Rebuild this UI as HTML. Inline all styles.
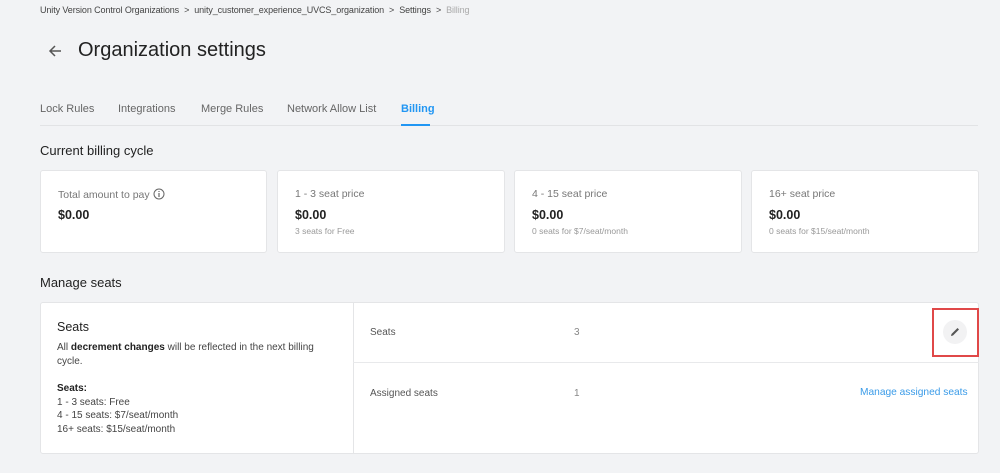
<!DOCTYPE html>
<html><head><meta charset="utf-8"><style>
*{box-sizing:border-box;margin:0;padding:0}
body{width:1000px;height:473px;overflow:hidden;background:#f2f3f5;font-family:"Liberation Sans",sans-serif;color:#222;position:relative}
.a{position:absolute;white-space:nowrap}
.bc{position:absolute;left:40px;top:5px;font-size:9px;color:#444;white-space:nowrap;letter-spacing:-0.1px}
.bc span{margin:0 5px}
.card{position:absolute;top:170px;height:83px;background:#fff;border:1px solid #e4e5e7;border-radius:3px}
.card .l{position:absolute;left:17px;top:17px;font-size:10.5px;color:#777}
.card .v{position:absolute;left:17px;top:37px;font-size:12.5px;font-weight:bold;color:#222}
.card .s{position:absolute;left:17px;top:55px;font-size:8.5px;color:#999}
.tab{top:103px;font-size:11px;color:#666}
</style></head><body>
<div class="bc">Unity Version Control Organizations<span>&gt;</span>unity_customer_experience_UVCS_organization<span>&gt;</span>Settings<span>&gt;</span><b style="font-weight:normal;color:#aaa">Billing</b></div>
<svg class="a" style="left:47px;top:43px" width="16" height="16" viewBox="0 0 16 16"><path d="M14 8H3M8 3L3 8l5 5" fill="none" stroke="#555" stroke-width="1.5"/></svg>
<div class="a" style="left:78px;top:39px;font-size:20px;color:#222">Organization settings</div>
<div class="a tab" style="left:40px;top:103px">Lock Rules</div>
<div class="a tab" style="left:118px">Integrations</div>
<div class="a tab" style="left:201px">Merge Rules</div>
<div class="a tab" style="left:287px">Network Allow List</div>
<div class="a tab" style="left:401px;color:#2196f3;font-weight:bold">Billing</div>
<div class="a" style="left:40px;top:125px;width:938px;height:1px;background:#e2e3e5"></div>
<div class="a" style="left:401px;top:124px;width:29px;height:2px;background:#2196f3"></div>
<div class="a" style="left:40px;top:143px;font-size:13px;color:#222">Current billing cycle</div>
<div class="card" style="left:40px;width:227px"><div class="l">Total amount to pay <svg style="vertical-align:-2px" width="12" height="12" viewBox="0 0 12 12"><circle cx="6" cy="6" r="5" fill="none" stroke="#666"/><path d="M6 5v4M6 3v1" stroke="#666" stroke-width="1.2"/></svg></div><div class="v">$0.00</div></div>
<div class="card" style="left:277px;width:228px"><div class="l">1 - 3 seat price</div><div class="v">$0.00</div><div class="s">3 seats for Free</div></div>
<div class="card" style="left:514px;width:228px"><div class="l">4 - 15 seat price</div><div class="v">$0.00</div><div class="s">0 seats for $7/seat/month</div></div>
<div class="card" style="left:751px;width:228px"><div class="l">16+ seat price</div><div class="v">$0.00</div><div class="s">0 seats for $15/seat/month</div></div>
<div class="a" style="left:40px;top:275px;font-size:13px;color:#222">Manage seats</div>
<div class="a" style="left:40px;top:302px;width:939px;height:152px;background:#fff;border:1px solid #e4e5e7;border-radius:3px"></div>
<div class="a" style="left:353px;top:302px;width:1px;height:152px;background:#e4e5e7"></div>
<div class="a" style="left:353px;top:362px;width:626px;height:1px;background:#e8e9eb"></div>
<div class="a" style="left:57px;top:320px;font-size:12.5px;color:#222">Seats</div>
<div class="a" style="left:57px;top:341px;font-size:10px;line-height:14px;color:#444;white-space:normal;width:280px">All <b style="color:#222">decrement changes</b> will be reflected in the next billing cycle.</div>
<div class="a" style="left:57px;top:382px;font-size:10px;line-height:13.7px;color:#444"><b style="color:#222">Seats:</b><br>1 - 3 seats: Free<br>4 - 15 seats: $7/seat/month<br>16+ seats: $15/seat/month</div>
<div class="a" style="left:370px;top:327px;font-size:10px;color:#555">Seats</div>
<div class="a" style="left:574px;top:327px;font-size:10px;color:#888">3</div>
<div class="a" style="left:370px;top:388px;font-size:10px;color:#555">Assigned seats</div>
<div class="a" style="left:574px;top:388px;font-size:10px;color:#888">1</div>
<div class="a" style="left:860px;top:387px;font-size:10.2px;color:#3a9be8">Manage assigned seats</div>
<div class="a" style="left:943px;top:320px;width:24px;height:24px;border-radius:50%;background:#f2f2f3"></div>
<svg class="a" style="left:949px;top:326px" width="12" height="12" viewBox="0 0 12 12"><path d="M2 10l0.5-2L8.5 2l1.5 1.5-6 6z" fill="#555"/></svg>
<div class="a" style="left:932px;top:308px;width:47px;height:49px;border:2px solid #e04848"></div>
</body></html>
